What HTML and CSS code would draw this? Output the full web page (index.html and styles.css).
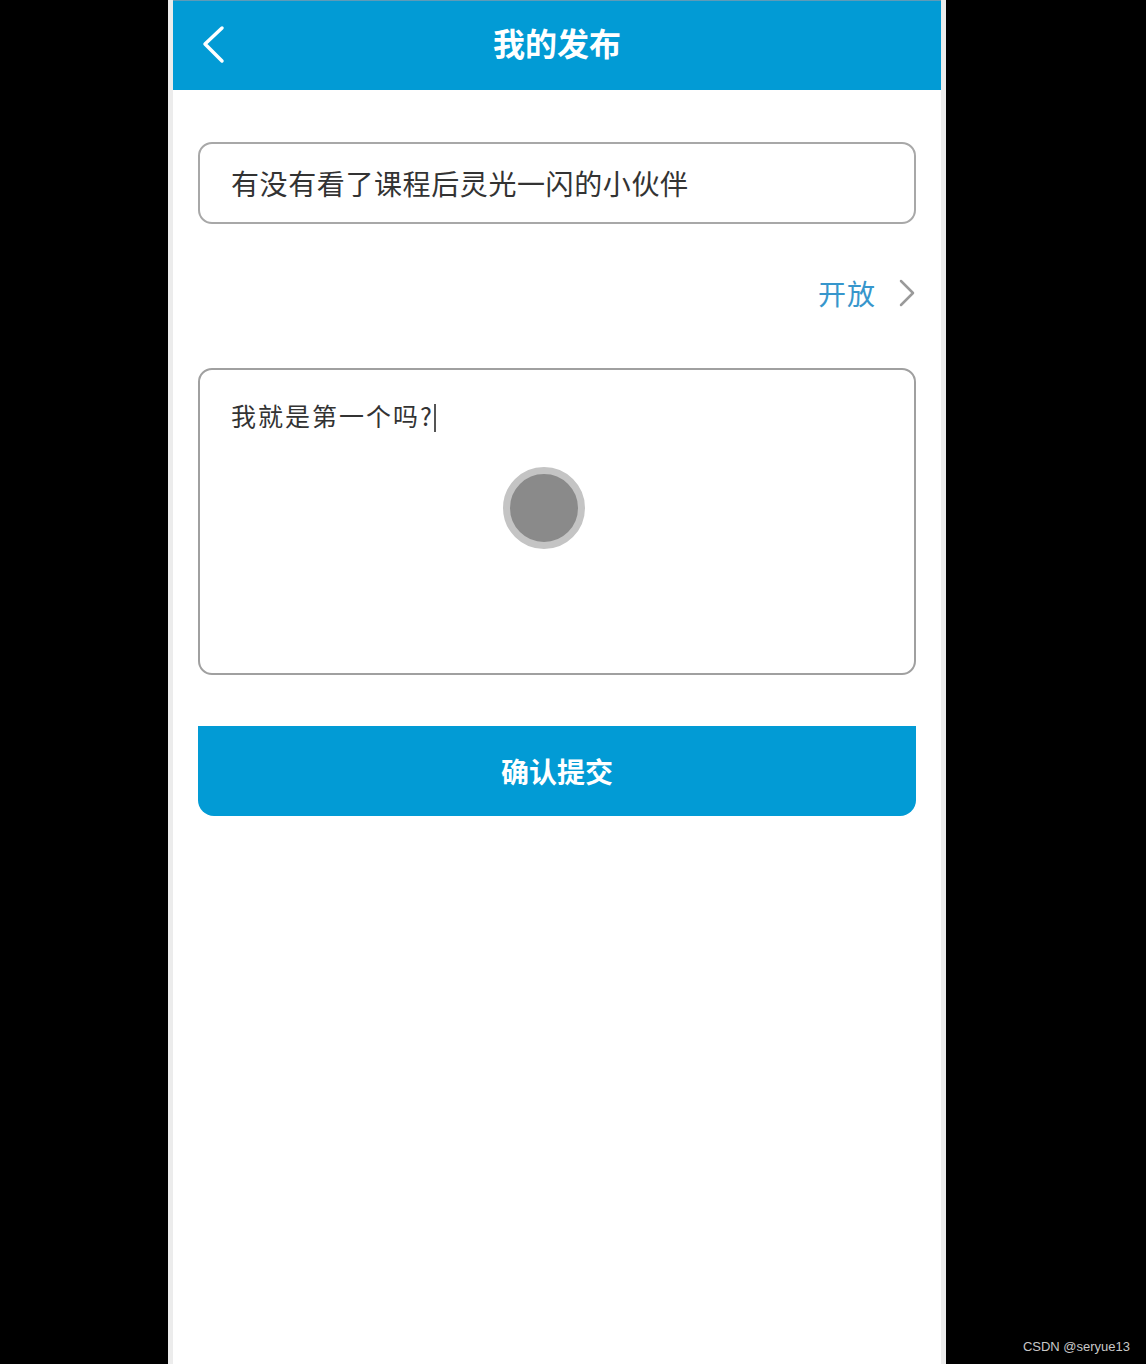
FILE: index.html
```html
<!DOCTYPE html>
<html lang="zh-CN">
<head>
    <meta charset="UTF-8">
    <meta name="viewport" content="width=device-width, initial-scale=1.0">
    <title>我的发布</title>
    <link rel="stylesheet" href="styles.css">
</head>
<body>
    <!-- Phone screen -->
    <div class="phone">
        <header class="top-bar">
            <span class="back-btn" aria-label="返回">
                <svg width="26" height="40" viewBox="0 0 26 40">
                    <path d="M21 3 L4 19 L21 36" fill="none" stroke="#fff" stroke-width="3.5" stroke-linecap="round" stroke-linejoin="round"/>
                </svg>
            </span>
            <h1 class="top-title">我的发布</h1>
        </header>

        <main class="form">
            <div class="field title-field">有没有看了课程后灵光一闪的小伙伴</div>

            <div class="privacy-row">
                <span class="privacy-value">开放</span>
                <svg class="privacy-arrow" width="18" height="30" viewBox="0 0 18 30">
                    <path d="M3 3 L15 15 L3 27" fill="none" stroke="#9a9a9a" stroke-width="2.5" stroke-linecap="round" stroke-linejoin="round"/>
                </svg>
            </div>

            <div class="field content-field">
                <span class="content-text">我就是第一个吗?</span><span class="caret"></span>
                <!-- touch indicator from the recording -->
                <span class="touch-dot"></span>
            </div>

            <button class="submit-btn">确认提交</button>
        </main>
    </div>

    <div class="watermark">CSDN @seryue13</div>
</body>
</html>
```

FILE: styles.css
```css
body, html {
    height: 100%;
    margin: 0;
    background-color: #000;
    font-family: "Noto Sans CJK SC", "Liberation Sans", sans-serif;
}

body {
    display: flex;
}

.phone {
    margin-left: 168px;
    width: 768px;
    min-height: 1364px;
    background-color: #fff;
    border-left: 5px solid #ececec;
    border-right: 5px solid #ececec;
}

/* Header */
.top-bar {
    height: 89px;
    background-color: #029bd5;
    border-top: 1px solid #5e9bb8;
    display: flex;
    align-items: center;
    justify-content: center;
    position: relative;
}

.back-btn {
    position: absolute;
    left: 28px;
    top: 24px;
}

.top-title {
    margin: 0 0 7px;
    color: #fff;
    font-size: 32px;
    font-weight: bold;
    letter-spacing: 0;
}

/* Form */
.form {
    padding: 52px 25px 0;
    display: flex;
    flex-direction: column;
}

.field {
    border: 2px solid #9c9c9c;
    border-radius: 14px;
    color: #333;
    box-sizing: border-box;
}

.title-field {
    height: 82px;
    padding: 0 31px;
    display: flex;
    align-items: center;
    font-size: 28px;
    letter-spacing: 0.6px;
    border-color: #a8a8a8;
}

.privacy-row {
    height: 144px;
    padding-bottom: 6px;
    box-sizing: border-box;
    display: flex;
    align-items: center;
    justify-content: flex-end;
    gap: 22px;
}

.privacy-value {
    color: #3796cc;
    font-size: 28px;
    letter-spacing: 1px;
}

.content-field {
    height: 307px;
    padding: 27px 31px;
    font-size: 25px;
    letter-spacing: 2px;
    position: relative;
    border-color: #a0a0a0;
}

.caret {
    display: inline-block;
    width: 2px;
    height: 28px;
    vertical-align: -6px;
    background-color: #555;
}

.touch-dot {
    position: absolute;
    left: 303px;
    top: 97px;
    width: 68px;
    height: 68px;
    border-radius: 50%;
    background-color: #8a8a8a;
    border: 7px solid #c4c4c4;
}

.submit-btn {
    margin-top: 51px;
    height: 90px;
    border: none;
    border-radius: 0 0 16px 16px;
    background-color: #029bd5;
    color: #fff;
    font-family: inherit;
    font-size: 28px;
    font-weight: bold;
    cursor: pointer;
}

.watermark {
    position: absolute;
    right: 16px;
    bottom: 10px;
    color: #c8c8c8;
    font-family: "Liberation Sans", sans-serif;
    font-size: 13px;
}
```
